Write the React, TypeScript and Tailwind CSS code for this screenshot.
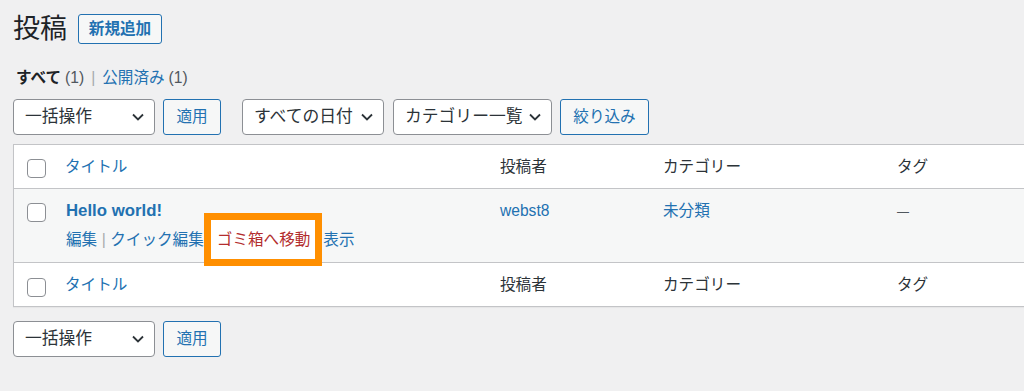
import React from 'react'

const FONT = "font-['Liberation_Sans','Noto_Sans_CJK_JP',sans-serif]"

function Chevron() {
  return (
    <svg width="12" height="8" viewBox="0 0 12 8" className="shrink-0">
      <path d="M1 1.5 L6 6.5 L11 1.5" fill="none" stroke="#2c3338" strokeWidth="1.8" />
    </svg>
  )
}

function Select({ label, width }: { label: string; width: string }) {
  return (
    <div className={`${width} h-[36px] flex items-center justify-between pl-[11px] pr-[10px] bg-white border border-[#8c8f94] rounded-[4px] text-[16.8px] leading-[20px] text-[#2c3338]`}>
      <span>{label}</span>
      <Chevron />
    </div>
  )
}

function Button({ label, width }: { label: string; width: string }) {
  return (
    <button className={`${width} h-[36px] flex items-center justify-center bg-[#f6f7f7] border border-[#2271b1] rounded-[3px] text-[15.6px] leading-[20px] text-[#2271b1]`}>
      {label}
    </button>
  )
}

function Checkbox({ className = '' }: { className?: string }) {
  return <span className={`block w-[19px] h-[19px] bg-white border border-[#8c8f94] rounded-[4px] ${className}`} />
}

const COLS = 'grid grid-cols-[51px_435px_163px_234px_1fr]'

function HeadRow({ border }: { border: 'b' | 't' }) {
  return (
    <div className={`${COLS} h-[44px] items-center bg-white ${border === 'b' ? 'border-b' : 'border-t'} border-[#c3c4c7] text-[15.6px] leading-[20px] text-[#2c3338]`}>
      <div className="pl-[13px]">
        <Checkbox className={border === 'b' ? 'mt-[4px]' : 'mt-[5px]'} />
      </div>
      <a className="text-[#2271b1]">タイトル</a>
      <span>投稿者</span>
      <span>カテゴリー</span>
      <span>タグ</span>
    </div>
  )
}

export default function App() {
  return (
    <div className={`min-h-screen w-full overflow-hidden bg-[#f0f0f1] ${FONT} text-[#3c434a]`}>
      <div className="pl-[13px] pt-[14px]">
        <div className="flex items-center h-[30px]">
          <h1 className="text-[27px] leading-[30px] text-[#1d2327]">投稿</h1>
          <a className="ml-[11px] w-[84px] h-[30px] flex items-center justify-center bg-[#f6f7f7] border border-[#2271b1] rounded-[3px] text-[15.6px] font-bold text-[#2271b1]">
            新規追加
          </a>
        </div>

        <ul className="mt-[24px] ml-[3px] flex items-center h-[20px] text-[15.6px] leading-[20px]">
          <li className="font-bold text-[#1d2327]">すべて</li>
          <li className="ml-[4px] text-[#50575e]">(1)</li>
          <li className="mx-[7px] text-[#a7aaad]">|</li>
          <li className="text-[#2271b1]">公開済み</li>
          <li className="ml-[4px] text-[#50575e]">(1)</li>
        </ul>

        <div className="mt-[11px] flex items-center">
          <Select label="一括操作" width="w-[142px]" />
          <div className="ml-[8px]"><Button label="適用" width="w-[58px]" /></div>
          <div className="ml-[21px]"><Select label="すべての日付" width="w-[142px]" /></div>
          <div className="ml-[9px]"><Select label="カテゴリー一覧" width="w-[159px]" /></div>
          <div className="ml-[8px]"><Button label="絞り込み" width="w-[89px]" /></div>
        </div>

        <div className="mt-[9px] w-[1040px] border border-[#c3c4c7] bg-white shadow-[0_1px_1px_rgba(0,0,0,0.04)]">
          <HeadRow border="b" />

          <div className={`${COLS} h-[73px] bg-[#f6f7f7] text-[15.6px] leading-[20px]`}>
            <div className="pl-[13px] pt-[14px]">
              <Checkbox />
            </div>
            <div className="pt-[12px] pl-[1px]">
              <a className="block text-[16.8px] font-bold text-[#2271b1]">Hello world!</a>
              <div className="mt-[9px] flex items-center text-[#2271b1]">
                <a>編集</a>
                <span className="w-[13px] text-center text-[#a7aaad]">|</span>
                <a>クイック編集</a>
                <span className="w-[13px] text-center text-[#a7aaad]">|</span>
                <span className="relative">
                  <span className="absolute left-[-13px] right-[-12px] top-[-17px] bottom-[-16px] border-[7px] border-[#ff8f00] bg-white" />
                  <a className="relative text-[#b32d2e]">ゴミ箱へ移動</a>
                </span>
                <span className="w-[13px] text-center text-[#a7aaad]">|</span>
                <a>表示</a>
              </div>
            </div>
            <div className="pt-[12px] text-[#2271b1]">webst8</div>
            <div className="pt-[12px] text-[#2271b1]">未分類</div>
            <div className="pt-[12px] text-[#50575e]">
              <span className="text-[12px]">—</span>
            </div>
          </div>

          <HeadRow border="t" />
        </div>

        <div className="mt-[14px] flex items-center">
          <Select label="一括操作" width="w-[142px]" />
          <div className="ml-[8px]"><Button label="適用" width="w-[58px]" /></div>
        </div>
      </div>
    </div>
  )
}
